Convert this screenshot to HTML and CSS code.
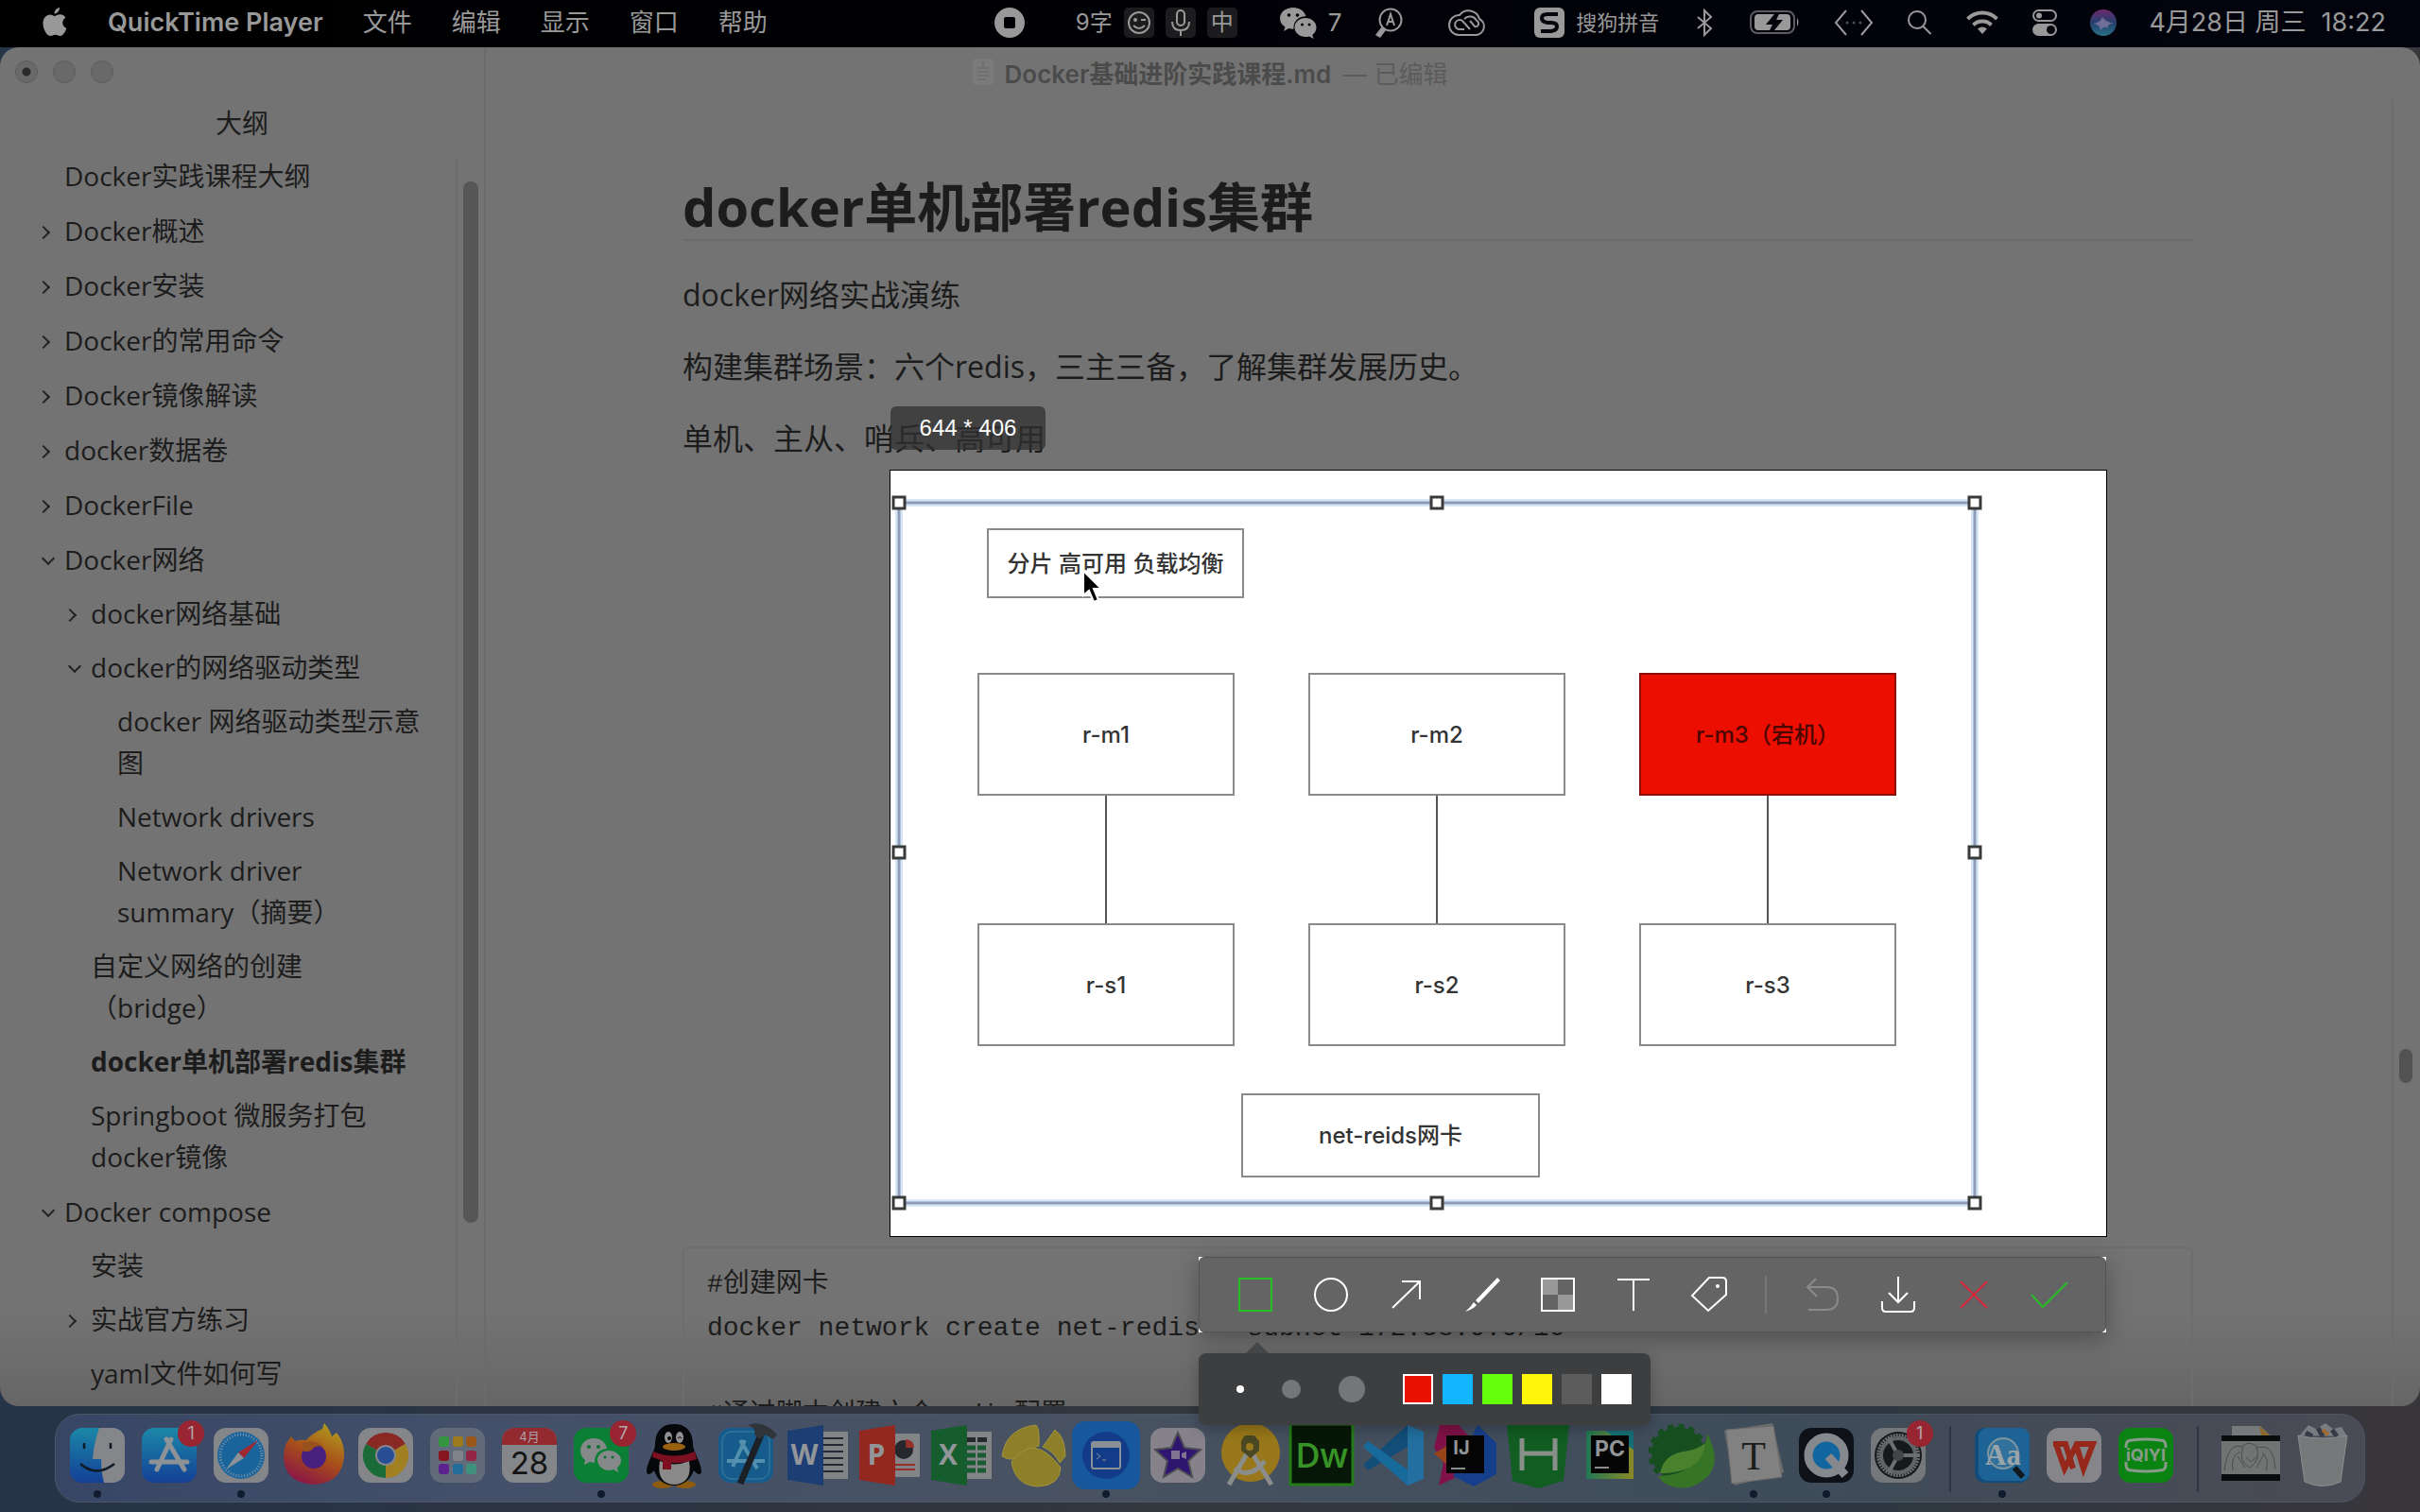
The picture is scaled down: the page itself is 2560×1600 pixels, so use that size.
FILE: index.html
```html
<!DOCTYPE html>
<html lang="zh-CN">
<head>
<meta charset="utf-8">
<title>Docker基础进阶实践课程.md</title>
<link rel="stylesheet" href="styles.css">
</head>
<body>

<header class="menubar">
	<nav class="menus">
		<button class="apple" aria-label="Apple"><svg width="28" height="34" viewBox="0 0 28 34"><path d="M19 1c.3 3-2.500 6.500-5.400 6.600C13.200 4.600 16 1.500 19 1zM13.800 10c1.400 0 3-1.700 5.800-1.700 2.300 0 4.500 1.200 5.900 3.300-4.800 2.800-4 9.700.9 11.500-1.300 3.500-3.700 7.900-6.500 8-2 0-2.700-1.300-5.200-1.300s-3.300 1.300-5.200 1.300C5.300 31.200 1.500 23.500 1.500 18c0-6 3.700-9.500 7.500-9.500 2.300 0 3.700 1.500 4.800 1.500z"/></svg></button>
		<button class="app-name">QuickTime Player</button>
		<button>文件</button>
		<button>编辑</button>
		<button>显示</button>
		<button>窗口</button>
		<button>帮助</button>
	</nav>
	<div class="status">
		<svg class="record" width="32" height="32" viewBox="0 0 32 32"><path fill-rule="evenodd" d="M16 0a16 16 0 1 0 0 32 16 16 0 0 0 0-32zM12 10h8q2 0 2 2v8q0 2-2 2h-8q-2 0-2-2v-8q0-2 2-2z"/></svg>
		<div class="ime">
			<span>9字</span>
			<svg width="32" height="32" viewBox="0 0 32 32"><rect class="key" width="32" height="32" rx="5"/><circle class="ln" cx="16" cy="16" r="11"/><circle cx="12" cy="13" r="2"/><path class="ln" d="M18 13h5M10 19q6 6 12 0"/></svg>
			<svg width="32" height="32" viewBox="0 0 32 32"><rect class="key" width="32" height="32" rx="5"/><rect class="ln" x="12" y="3" width="8" height="16" rx="4"/><path class="ln" d="M7 15q0 9 9 9t9-9M16 24v6"/></svg>
			<span class="key-text">中</span>
		</div>
		<div class="wechat-status">
			<svg width="40" height="34" viewBox="0 0 40 34"><path d="M15 1C7 1 1 6 1 12.500c0 4 2 7 5.500 9L5 26l5.500-3q2 .7 5 .7C15 16 20 10.500 28.500 10.300 27 4.500 21.500 1 15 1z"/><path d="M28 12c-6.500 0-11.500 4.500-11.500 10S21.500 32 28 32q2 0 4-.6L36.500 34 35.300 29.800c2.700-1.800 4.200-4.500 4.200-7.800 0-5.500-5-10-11.500-10z"/><g fill="#000"><circle cx="10.500" cy="9" r="1.800"/><circle cx="19.500" cy="9" r="1.800"/><circle cx="24.500" cy="19" r="1.500"/><circle cx="32" cy="19" r="1.500"/></g></svg>
			<span>7</span>
		</div>
		<svg width="32" height="34" viewBox="0 0 32 34"><circle class="ln" cx="18" cy="14" r="11.500" stroke-width="3"/><path d="M9 21l4 4-6 8-5-3z"/><path class="ln" d="M14 20l4-12 4 12M15.500 16h5"/></svg>
		<svg width="70" height="32" viewBox="0 0 70 32"><path class="ln" stroke-width="3" d="M24 29h18a9 9 0 0 0 4-17A12 12 0 0 0 25 8a10.500 10.500 0 0 0-1 21z"/><path class="ln" stroke-width="3" d="M36 23l-8-9a5 5 0 1 0-2 9h4M30 12a8 8 0 0 1 13 2M36 14l5 6a3 3 0 1 0 2-6"/></svg>
		<div class="sogou">
			<svg width="32" height="32" viewBox="0 0 32 32"><rect width="32" height="32" rx="6"/><path fill="none" stroke="#05060c" stroke-width="4" d="M25 7H14q-6 0-6 4t6 5h4q6 0 6 4t-6 5H7"/></svg>
			<span>搜狗拼音</span>
		</div>
		<svg width="28" height="30" viewBox="0 0 28 30"><path class="ln" d="M7 9l14 12-7 7V2l7 7L7 21"/></svg>
		<svg width="54" height="28" viewBox="0 0 54 28"><rect class="ln" x="1" y="2" width="46" height="23" rx="7" opacity=".6"/><path d="M50 9q3 4 0 9z"/><path d="M9 5h17l-9 11h7l-3 6H9q-4 0-4-4V9q0-4 4-4zM31 5h8q4 0 4 4v9q0 4-4 4H26l9-11h-7z"/></svg>
		<svg width="44" height="32" viewBox="0 0 44 32"><path class="ln" d="M14 3L3 16l11 13M30 3l11 13-11 13"/><g opacity=".5"><circle cx="15" cy="16" r="1.500"/><circle cx="22" cy="16" r="1.500"/><circle cx="29" cy="16" r="1.500"/></g></svg>
		<svg width="28" height="28" viewBox="0 0 28 28"><circle class="ln" cx="11" cy="11" r="9"/><path class="ln" stroke-width="3" d="M17.500 18l8 8"/></svg>
		<svg width="36" height="28" viewBox="0 0 36 28"><path class="ln thick" d="M2.500 10a22 22 0 0 1 31 0M8.500 16.500a13.500 13.500 0 0 1 19 0"/><path d="M18 26l-5-5.500q5-4 10 0z"/></svg>
		<svg width="28" height="30" viewBox="0 0 28 30"><rect class="ln" x="2" y="2" width="24" height="11" rx="5.500"/><circle cx="8" cy="7.500" r="3"/><rect x="1" y="16" width="26" height="13" rx="6.500"/><circle cx="20.500" cy="22.500" r="4.500" fill="#05060c"/></svg>
		<svg width="28" height="28" viewBox="0 0 28 28"><defs><linearGradient id="siri" x1="0" y1="0" x2="0" y2="1"><stop offset="0" stop-color="#6d2a6e"/><stop offset=".5" stop-color="#24406f"/><stop offset="1" stop-color="#2a6f86"/></linearGradient></defs><circle cx="14" cy="14" r="14" fill="url(#siri)"/><path d="M3 15q8-1 10-7 3 5 12 7-8 0-6 5-4-4-8 2 0-6-8-7z" fill="#6f6f9a"/></svg>
		<span class="clock"><span>4月28日 周三</span><span>18:22</span></span>
	</div>
</header>

<section class="window">
	<div class="titlebar">
		<div class="lights"><button class="edited" aria-label="关闭"></button><button aria-label="最小化"></button><button aria-label="缩放"></button></div>
		<div class="title">
			<svg width="22" height="28" viewBox="0 0 22 28"><rect width="22" height="28" rx="3" fill="#7a7a7a"/><path d="M5 10h12M5 14h12M5 18h12M5 22h9M11 3v6" stroke="#666" fill="none"/></svg>
			<strong>Docker基础进阶实践课程.md</strong>
			<span>— 已编辑</span>
		</div>
	</div>

	<aside class="sidebar">
		<h2>大纲</h2>
		<div class="outline">
			<ul class="tree">
				<li><a href="#">Docker实践课程大纲</a></li>
				<li class="closed"><a href="#">Docker概述</a></li>
				<li class="closed"><a href="#">Docker安装</a></li>
				<li class="closed"><a href="#">Docker的常用命令</a></li>
				<li class="closed"><a href="#">Docker镜像解读</a></li>
				<li class="closed"><a href="#">docker数据卷</a></li>
				<li class="closed"><a href="#">DockerFile</a></li>
				<li class="open"><a href="#">Docker网络</a>
					<ul>
						<li class="closed"><a href="#">docker网络基础</a></li>
						<li class="open"><a href="#">docker的网络驱动类型</a>
							<ul>
								<li><a href="#">docker 网络驱动类型示意图</a></li>
								<li><a href="#">Network drivers</a></li>
								<li><a href="#">Network driver summary（摘要）</a></li>
							</ul>
						</li>
						<li><a href="#">自定义网络的创建<br>（bridge）</a></li>
						<li><a href="#" class="current">docker单机部署redis集群</a></li>
						<li><a href="#">Springboot 微服务打包docker镜像</a></li>
					</ul>
				</li>
				<li class="open"><a href="#">Docker compose</a>
					<ul>
						<li><a href="#">安装</a></li>
						<li class="closed"><a href="#">实战官方练习</a></li>
						<li><a href="#">yaml文件如何写</a></li>
					</ul>
				</li>
			</ul>
			<div class="track"><div class="thumb"></div></div>
		</div>
	</aside>

	<main class="content">
		<article>
			<h1>docker单机部署redis集群</h1>
			<p>docker网络实战演练</p>
			<p>构建集群场景：六个redis，三主三备，了解集群发展历史。</p>
			<p>单机、主从、哨兵、高可用</p>

			<figure class="capture">
				<svg class="diagram" width="1286" height="810" viewBox="0 0 1286 810">
					<rect class="frame-glow" x="9" y="34" width="1138" height="741"/>
					<rect class="frame" x="9" y="34" width="1138" height="741"/>
					<path class="wire" d="M228 343v137M578 343v137M928 343v137"/>
					<g class="node">
						<rect x="103" y="62" width="270" height="72"/>
						<rect x="93" y="215" width="270" height="128"/>
						<rect x="443" y="215" width="270" height="128"/>
						<rect class="down" x="793" y="215" width="270" height="128"/>
						<rect x="93" y="480" width="270" height="128"/>
						<rect x="443" y="480" width="270" height="128"/>
						<rect x="793" y="480" width="270" height="128"/>
						<rect x="372" y="660" width="314" height="87"/>
					</g>
					<g class="label">
						<text x="238" y="107">分片 高可用 负载均衡</text>
						<text x="228" y="288">r-m1</text>
						<text x="578" y="288">r-m2</text>
						<text x="928" y="288" class="on-red">r-m3（宕机）</text>
						<text x="228" y="553">r-s1</text>
						<text x="578" y="553">r-s2</text>
						<text x="928" y="553">r-s3</text>
						<text x="529" y="712">net-reids网卡</text>
					</g>
					<g class="handle">
						<rect x="3" y="28" width="12" height="12"/><rect x="572" y="28" width="12" height="12"/><rect x="1141" y="28" width="12" height="12"/>
						<rect x="3" y="398" width="12" height="12"/><rect x="1141" y="398" width="12" height="12"/>
						<rect x="3" y="769" width="12" height="12"/><rect x="572" y="769" width="12" height="12"/><rect x="1141" y="769" width="12" height="12"/>
					</g>
					<path class="cursor" d="M204 106v26l6-5 5 12 5-2-5-12h8z"/>
				</svg>

				<div class="size">644 * 406</div>

				<div class="toolbar-back">
					<div class="toolbar">
						<button aria-label="矩形" class="green"><svg viewBox="0 0 40 40"><rect x="3" y="3" width="34" height="34"/></svg></button>
						<button aria-label="椭圆"><svg viewBox="0 0 40 40"><circle cx="20" cy="20" r="17"/></svg></button>
						<button aria-label="箭头"><svg viewBox="0 0 40 40"><path d="M5 34L34 6M15 6h19v19"/></svg></button>
						<button aria-label="画笔"><svg viewBox="0 0 40 40"><path class="solid" d="M36 2l3 3-23 24-3-3zM11 28l3 3q-3 4-12 7 6-5 9-10z"/></svg></button>
						<button aria-label="马赛克"><svg viewBox="0 0 40 40"><path class="shade" d="M4 4h16v16H4zM20 20h16v16H20z"/><rect x="3" y="3" width="34" height="34"/></svg></button>
						<button aria-label="文字"><svg viewBox="0 0 40 40"><path d="M3 4h34M20 4v33"/></svg></button>
						<button aria-label="标签"><svg viewBox="0 0 40 40"><path d="M20 2h14q4 0 4 4v14L19 37 2 21z"/><circle class="solid" cx="29" cy="11" r="2"/></svg></button>
						<span class="divider"></span>
						<button aria-label="撤销" class="off"><svg viewBox="0 0 40 40"><path d="M13 3L4 12l10 10M4 12h20q12 0 12 12t-12 12H5"/></svg></button>
						<button aria-label="保存"><svg viewBox="0 0 40 40"><path d="M20 1v27M10 18l10 10 10-10M3 27v7q0 4 4 4h26q4 0 4-4v-7"/></svg></button>
						<button aria-label="取消" class="red"><svg viewBox="0 0 40 40"><path d="M6 6l28 28M34 6L6 34"/></svg></button>
						<button aria-label="完成" class="green"><svg viewBox="0 0 40 40"><path d="M1 20l12 13L39 7"/></svg></button>
					</div>
				</div>

				<div class="options">
					<button class="dot small" aria-label="细"></button>
					<button class="dot medium" aria-label="中"></button>
					<button class="dot large" aria-label="粗"></button>
					<div class="swatches">
						<button class="c-red" aria-label="红"></button>
						<button class="c-blue" aria-label="蓝"></button>
						<button class="c-green" aria-label="绿"></button>
						<button class="c-yellow" aria-label="黄"></button>
						<button class="c-gray" aria-label="灰"></button>
						<button class="c-white" aria-label="白"></button>
					</div>
				</div>
			</figure>

			<pre><code>#创建网卡
docker network create net-redis --subnet 172.38.0.0/16

#通过脚本创建六个redis配置</code></pre>
		</article>
		<div class="page-track"><div class="page-thumb"></div></div>
	</main>
</section>

<footer class="desk">
	<nav class="dock">
		<!-- Finder -->
		<a href="#" class="running"><svg viewBox="0 0 72 72"><defs><linearGradient id="blue" x1="0" y1="0" x2="0" y2="1"><stop offset="0" stop-color="#1b88a8"/><stop offset="1" stop-color="#143f96"/></linearGradient><clipPath id="tile"><rect x="7" y="7" width="58" height="58" rx="13"/></clipPath></defs><g clip-path="url(#tile)"><path fill="url(#blue)" d="M7 7h58v58H7z"/><path fill="#85868a" d="M38 7q-6 17-7 33h9q0 14 3 25h22V7z"/></g><path d="M22 23v6M50 23v6M18 45q17 15 36 0" fill="none" stroke="#101a26" stroke-width="2.500"/></svg></a>
		<!-- App Store -->
		<a href="#"><svg viewBox="0 0 72 72"><rect x="7" y="7" width="58" height="58" rx="13" fill="url(#blue)"/><path d="M38 19L23 51M33 19l19 32M17 43h38" stroke="#8d9296" stroke-width="5" stroke-linecap="round"/></svg><b class="badge">1</b></a>
		<!-- Safari -->
		<a href="#" class="running"><svg viewBox="0 0 72 72"><rect x="7" y="7" width="58" height="58" rx="13" fill="#85868a"/><circle cx="36" cy="36" r="25" fill="#1a649c"/><circle cx="36" cy="36" r="22" fill="none" stroke="#7a93a8" stroke-width="3" stroke-dasharray="1 2"/><path d="M54 20L33 33l6 6z" fill="#a02830"/><path d="M20 51l13-18 6 6z" fill="#8d9094"/></svg></a>
		<!-- Firefox -->
		<a href="#"><svg viewBox="0 0 72 72"><defs><linearGradient id="fox" x1=".8" y1="0" x2=".3" y2="1"><stop offset="0" stop-color="#b0a020"/><stop offset=".5" stop-color="#a85018"/><stop offset="1" stop-color="#8a1448"/></linearGradient></defs><path fill="url(#fox)" d="M6 25l6-9 4 5q6-2 12-1 6-7 17-12l2-6q6 7 8 14l5-4q9 11 8 25-2 28-31 30Q5 66 4 38q0-7 2-13z"/><circle cx="36" cy="37" r="13" fill="#482080"/><path d="M23 23q14-5 23 4-8-2-11 2-3 5-13 2 4-3 1-8z" fill="#98501c"/></svg></a>
		<!-- Chrome -->
		<a href="#"><svg viewBox="0 0 72 72"><rect x="7" y="7" width="58" height="58" rx="13" fill="#85868a"/><path fill="#8a2823" d="M36 36L15.200 24a24 24 0 0 1 41.600 0z"/><path fill="#1b6b38" d="M36 36v24A24 24 0 0 1 15.200 24z"/><path fill="#a08020" d="M36 36l20.800-12A24 24 0 0 1 36 60z"/><circle cx="36" cy="36" r="11" fill="#85868a"/><circle cx="36" cy="36" r="9" fill="#284f96"/></svg></a>
		<!-- Launchpad -->
		<a href="#"><svg viewBox="0 0 72 72"><rect x="7" y="7" width="58" height="58" rx="13" fill="#626b7a"/><g><rect x="16" y="16" width="11" height="11" rx="3" fill="#359540"/><rect x="31" y="16" width="11" height="11" rx="3" fill="#9b7a1c"/><rect x="45" y="16" width="11" height="11" rx="3" fill="#9a581c"/><rect x="16" y="31" width="11" height="11" rx="3" fill="#861520"/><rect x="31" y="31" width="11" height="11" rx="3" fill="#818388"/><rect x="45" y="31" width="11" height="11" rx="3" fill="#932545"/><rect x="16" y="45" width="11" height="11" rx="3" fill="#5b2290"/><rect x="31" y="45" width="11" height="11" rx="3" fill="#226d9b"/><rect x="45" y="45" width="11" height="11" rx="3" fill="#3f917c"/></g></svg></a>
		<!-- Calendar -->
		<a href="#"><svg viewBox="0 0 72 72"><g clip-path="url(#tile)"><path fill="#85868a" d="M7 7h58v58H7z"/><path fill="#922a30" d="M7 7h58v18H7z"/></g><text x="36" y="21" font-size="13" fill="#a9a4a5">4月</text><text x="36" y="56" font-size="33" fill="#141414">28</text></svg></a>
		<!-- WeChat -->
		<a href="#" class="running"><svg viewBox="0 0 72 72"><rect x="7" y="7" width="58" height="58" rx="13" fill="#0b7f34"/><path fill="#85898a" d="M28 18c-8 0-14 6-14 13 0 4 2 8 5 10l-1 5 6-3 5 1c-1-10 7-15 13-15-1-7-7-11-14-11z"/><path fill="#85898a" d="M44 31c-7 0-12 5-12 10s5 11 12 11l5-1 5 3-1-5c2-2 4-4 4-8 0-5-6-10-13-10z"/><g fill="#0b6f30"><circle cx="23" cy="27" r="2"/><circle cx="33" cy="27" r="2"/><circle cx="40" cy="38" r="1.500"/><circle cx="48" cy="38" r="1.500"/></g></svg><b class="badge">7</b></a>
		<!-- QQ -->
		<a href="#"><svg viewBox="0 0 72 72"><ellipse cx="24" cy="67" rx="11" ry="4" fill="#8e5c10"/><ellipse cx="48" cy="67" rx="11" ry="4" fill="#8e5c10"/><path fill="#06070a" d="M36 3c14 0 20 9 20 22 0 6 9 19 9 28 0 4-4 4-8-1-4 10-11 16-21 16S18 62 15 52c-4 5-8 5-8 1 0-9 9-22 9-28C16 12 22 3 36 3z"/><path fill="#898989" d="M21 42q15 7 31 0 4 24-16 25-19-1-15-25z"/><ellipse cx="30" cy="17" rx="4" ry="6" fill="#929292"/><ellipse cx="42" cy="17" rx="4" ry="6" fill="#929292"/><circle cx="31" cy="18" r="2"/><path d="M40 18q2-3 4 0" stroke="#000" fill="none"/><ellipse cx="36" cy="27" rx="12" ry="4" fill="#986210"/><path fill="#7c1020" d="M14 32q22 9 44 0l2 8q-14 5-27 4v7h-9v-9l-11-4z"/></svg></a>
		<!-- Xcode -->
		<a href="#"><svg viewBox="0 0 72 72"><rect x="7" y="7" width="58" height="58" rx="13" fill="#155c8c"/><rect x="11" y="11" width="50" height="50" rx="10" fill="none" stroke="#417f9e"/><path d="M35 20L22 48M30 20l18 30M16 42h40" stroke="#5290ae" stroke-width="4"/><path d="M53 12L30 66" stroke="#1b2027" stroke-width="7"/><path fill="#30353a" d="M38 4q13-5 26 5l5 5-4 5-9-5-5 5-6-5q2-7-7-10z"/></svg></a>
		<!-- Word -->
		<a href="#"><svg viewBox="0 0 72 72"><path fill="#828486" d="M38 11h30v50H38z"/><path stroke="#232a35" stroke-width="2" d="M42 18h21M42 25h21M42 32h21M42 39h21M42 46h21M42 53h21"/><path fill="#1d3d75" d="M4 10l38-6v64L4 62z"/><text class="letter" x="22" y="46" font-size="30">W</text></svg></a>
		<!-- PowerPoint -->
		<a href="#"><svg viewBox="0 0 72 72"><path fill="#828486" d="M38 13h30v46H38z"/><circle cx="51" cy="30" r="10" fill="#25272c"/><path fill="#93302a" d="M53 19q9 1 9 9h-9z"/><path stroke="#93302a" stroke-width="2" d="M42 46h21M42 51h21"/><path fill="#92281f" d="M4 10l38-6v64L4 62z"/><text class="letter" x="22" y="46" font-size="30">P</text></svg></a>
		<!-- Excel -->
		<a href="#"><svg viewBox="0 0 72 72"><path fill="#828486" d="M38 11h30v50H38z"/><path fill="#25272c" d="M42 17h9v5h-9zM53 17h10v5H53z"/><path stroke="#195c33" stroke-width="5" stroke-dasharray="9 2" d="M42 28h22M42 36h22M42 44h22M42 52h22"/><path fill="#155d2c" d="M4 10l38-6v64L4 62z"/><text class="letter" x="22" y="46" font-size="30">X</text></svg></a>
		<!-- Yellow shells -->
		<a href="#"><svg viewBox="0 0 72 72"><g fill="#8d8029" stroke="#a2923d"><path d="M2 37Q6 8 37 4q5 0 4 22-14 3-22 13-9 3-17-2z"/><path d="M45 27l13-18q11 8 11 28l-6 7q-6-12-18-17z"/><path d="M12 43q24-32 52 6-1 19-24 20-24-1-28-26z"/></g></svg></a>
		<!-- Terminal client -->
		<a href="#" class="running"><svg viewBox="0 0 72 72"><rect x="0" y="0" width="72" height="72" rx="14" fill="#17579b"/><circle cx="36" cy="36" r="25" fill="#123c88"/><rect x="21" y="22" width="30" height="28" rx="2" fill="none" stroke="#8b9095" stroke-width="2"/><path fill="#8b9095" d="M21 22h30v6H21z"/><path d="M26 34l4 3-4 3M32 41h4" fill="none" stroke="#8b9095"/></svg></a>
		<!-- iMovie -->
		<a href="#"><svg viewBox="0 0 72 72"><rect x="7" y="7" width="58" height="58" rx="13" fill="#85828a"/><path fill="#301570" stroke="#4c4c55" stroke-width="2" d="M36 12l7 16 17 2-13 12 4 17-15-9-15 9 4-17-13-12 17-2z"/><path fill="#7f7590" d="M29 31h9v9h-9zM40 34l5-2v8l-5-2z"/></svg></a>
		<!-- Android Studio -->
		<a href="#"><svg viewBox="0 0 72 72"><circle cx="37" cy="33" r="31" fill="#98781a"/><path d="M35 31L14 67M37 31l22 36M20 50q17 12 32-8" fill="none" stroke="#8b8c8c" stroke-width="5"/><path fill="#4b4824" d="M31 15h10l5 6v10l-9 8-10-8V21z"/><circle cx="36" cy="27" r="4" fill="#98781a"/></svg></a>
		<!-- Dreamweaver -->
		<a href="#"><svg viewBox="0 0 72 72"><rect x="3" y="3" width="66" height="64" fill="#071707" stroke="#237c18" stroke-width="3"/><text class="dw" x="36" y="49" font-size="36">Dw</text></svg></a>
		<!-- VS Code -->
		<a href="#"><svg viewBox="0 0 72 72"><path fill="#124e78" d="M51 4L4 46l5 6 42-25z"/><path fill="#176b9a" d="M4 27l5-6 42 30v17z"/><path fill="#236f9f" d="M51 4l17 7v50l-17 7z"/></svg></a>
		<!-- IntelliJ IDEA -->
		<a href="#"><svg viewBox="0 0 72 72"><path fill="#801248" d="M8 4h20l13 14-13 40L7 68l5-24-10-16z"/><path fill="#964319" d="M2 34l16-9v23z"/><path fill="#163f8b" d="M48 4l20 19v33L44 69 22 58z"/><rect x="15" y="15" width="40" height="40" fill="#050505"/><text class="ide" x="31" y="35" font-size="20">IJ</text><path stroke="#8b8c8c" stroke-width="2" d="M20 50h15"/></svg></a>
		<!-- HBuilder -->
		<a href="#"><svg viewBox="0 0 72 72"><path fill="#115d22" d="M3 3h66l-6 60-27 8-27-8z"/><path d="M19 18v34M54 18v34M19 34h35" stroke="#899089" stroke-width="5"/></svg></a>
		<!-- PyCharm -->
		<a href="#"><svg viewBox="0 0 72 72"><defs><linearGradient id="charm"><stop offset="0" stop-color="#207854"/><stop offset="1" stop-color="#8b8924"/></linearGradient></defs><path fill="url(#charm)" d="M11 10h50v51H11z"/><path fill="#166f76" d="M31 10h30v20z"/><rect x="16" y="15" width="40" height="40" fill="#050505"/><text class="ide" x="36" y="37" font-size="23">PC</text><path stroke="#8b8c8c" stroke-width="2" d="M20 49h15"/></svg></a>
		<!-- Spring -->
		<a href="#"><svg viewBox="0 0 72 72"><circle cx="32" cy="34" r="28" fill="#164e20" stroke="#164e20" stroke-width="7" stroke-dasharray="6 5"/><path fill="#377526" d="M63 13q18 34-5 50-19 14-41 2l-6-7q32 0 45-23 6-9 7-22z"/><path fill="#4a812c" d="M61 23q-3 32-48 32 4-20 25-23 15-2 23-9z"/></svg></a>
		<!-- Typora -->
		<a href="#" class="running"><svg viewBox="0 0 72 72"><path fill="#6c6c6c" d="M5 10l51-8 12 52-52 14z"/><path fill="#818181" stroke="#6b6b6b" d="M7 9l50-4 9 54-53 7z"/><text class="typora" x="36" y="51" font-size="42">T</text></svg></a>
		<!-- QuickTime -->
		<a href="#" class="running"><svg viewBox="0 0 72 72"><rect x="7" y="7" width="58" height="58" rx="13" fill="#0e1217"/><circle cx="36" cy="36" r="19" fill="#1266a0" stroke="#85888d" stroke-width="9"/><path d="M38 37l18 20" stroke="#85888d" stroke-width="9"/></svg></a>
		<!-- System Preferences -->
		<a href="#"><svg viewBox="0 0 72 72"><rect x="7" y="7" width="58" height="58" rx="13" fill="#75777a"/><circle cx="36" cy="36" r="25" fill="#16191c"/><circle cx="36" cy="36" r="21" fill="none" stroke="#6d7072" stroke-width="4" stroke-dasharray="2 1"/><circle cx="36" cy="36" r="18" fill="none" stroke="#606366" stroke-width="4"/><path d="M26 18l10 18h20M36 36L26 54" fill="none" stroke="#6c6e70" stroke-width="4"/><circle cx="36" cy="36" r="6" fill="#424548"/></svg><b class="badge">1</b></a>
		<span class="split"></span>
		<!-- Dictionary -->
		<a href="#" class="running"><svg viewBox="0 0 72 72"><rect x="7" y="7" width="58" height="58" rx="10" fill="#124b7a"/><rect x="11" y="7" width="54" height="56" rx="9" fill="#1d6395"/><circle cx="37" cy="34" r="16" fill="#32719b" stroke="#7e949f" stroke-width="2"/><path d="M49 49l9 10" stroke="#11191e" stroke-width="6"/><text class="dict" x="37" y="46" font-size="31">Aa</text></svg></a>
		<!-- WPS -->
		<a href="#"><svg viewBox="0 0 72 72"><rect x="7" y="7" width="58" height="58" rx="13" fill="#86868a"/><path d="M14 24h13l8 26M17 24l9 26 13-26h17L46 50l-8-26" fill="none" stroke="#96281b" stroke-width="6"/></svg></a>
		<!-- iQIYI -->
		<a href="#"><svg viewBox="0 0 72 72"><rect x="7" y="7" width="58" height="58" rx="13" fill="#0b8313"/><path d="M15 28v-2q0-6 6-6 15-2 30 0 6 0 6 6v2M15 43v3q0 6 6 6 15 2 30 0 6 0 6-6v-3" fill="none" stroke="#8a9a8a" stroke-width="3"/><text class="iqiyi" x="36" y="42" font-size="18">iQIYI</text></svg></a>
		<span class="split"></span>
		<!-- Downloads stack -->
		<a href="#"><svg viewBox="0 0 72 72"><path fill="#777a7a" d="M16 5h30l15 14H16z"/><path fill="#8c692b" d="M45 5l16 14H48z"/><path fill="#0a0b0c" d="M5 15h62v48H5z"/><path fill="#717473" d="M5 21h62v35H5z"/><path d="M8 52q4-30 18-25 9-8 18 1 16-5 18 23M17 52q-3-15 8-20M28 27q-6 15 7 22 12-8 7-22M48 33q8 7 4 19M22 37l8 12M50 35l-8 14M31 38l5 5 6-5" fill="none" stroke="#4a4e4f"/></svg></a>
		<!-- Trash -->
		<a href="#"><svg viewBox="0 0 72 72"><path fill="#777d80" d="M12 15l9-11 8 4 10-6 8 6 9-2 6 10z"/><path d="M18 12l7 4M31 7l5 9M46 9l5 7" stroke="#333c46" stroke-width="5"/><path d="M36 9l6 5" stroke="#a06a32" stroke-width="4"/><path fill="#76787a" stroke="#8b8c8e" d="M10 15q26 6 52 0l-7 49q-19 9-38 0z"/></svg></a>
	</nav>
</footer>

</body>
</html>
```

FILE: styles.css
```css
*{
	box-sizing:border-box;
}
body{
	margin:0;
	height:100vh;
	display:flex;
	flex-direction:column;
	overflow:hidden;
	background:linear-gradient(90deg,#253447 0%,#2c3442 25%,#33383e 50%,#2c3843 72%,#39363b 100%);
	font-family:"Open Sans","Noto Sans CJK SC",sans-serif;
	color:#1c1c1c;
}
button{
	border:0;
	padding:0;
	background:none;
	font:inherit;
	color:inherit;
}
a{
	color:inherit;
	text-decoration:none;
}

/* menu bar */
.menubar{
	height:50px;
	flex:none;
	display:flex;
	justify-content:space-between;
	align-items:center;
	padding:0 36px 2px 44px;
	background:linear-gradient(90deg,#000,#02030d);
	color:#999;
	font-family:Inter,"Noto Sans CJK SC",sans-serif;
	font-size:26px;
	line-height:36px;
	white-space:nowrap;
}
.menus,.status,.ime,.wechat-status,.sogou,.clock{
	display:flex;
	align-items:center;
}
.menus{
	gap:42px;
}
.menubar svg{
	display:block;
	fill:#999;
}
.app-name{
	font-size:27px;
	font-weight:600;
}
.status{
	gap:34px;
}
.menubar .ln{
	fill:none;
	stroke:#999;
	stroke-width:2;
}
.menubar .thick{
	stroke-width:4;
}
.menubar .key{
	fill:#1c1c1e;
}
.record{
	margin-right:20px;
}
.ime{
	gap:12px;
	margin-right:10px;
}
.ime span{
	font-size:24px;
}
.ime .key-text{
	width:32px;
	height:32px;
	line-height:32px;
	border-radius:5px;
	background:#1c1c1e;
	text-align:center;
}
.wechat-status,.sogou{
	gap:12px;
}
.sogou span{
	font-size:22px;
}
.clock{
	gap:16px;
	font-size:27px;
}

/* editor window */
.window{
	flex:1;
	min-height:0;
	display:flex;
	position:relative;
	z-index:1;
	border-radius:20px;
	background:linear-gradient(0deg,#666 0,#737373 100px);
}
.titlebar{
	position:absolute;
	top:0;
	left:0;
	right:0;
	height:52px;
	display:flex;
	align-items:center;
	justify-content:center;
	font-family:Inter,"Noto Sans CJK SC",sans-serif;
	font-size:26px;
}
.lights{
	position:absolute;
	left:16px;
	display:flex;
	gap:16px;
}
.lights button{
	width:24px;
	height:24px;
	border:1px solid #5c5c5c;
	border-radius:50%;
	background:#696969;
}
.lights .edited{
	background:radial-gradient(circle,#2b2b2b 4px,#696969 5px);
}
.title{
	display:flex;
	align-items:center;
	gap:12px;
	color:#5c5c5c;
}
.title strong{
	font-weight:600;
	color:#4b4b4b;
}
.sidebar{
	width:514px;
	flex:none;
	display:flex;
	flex-direction:column;
	padding-top:58px;
	border-right:2px solid #6b6b6b;
	font-size:28px;
	line-height:44px;
}
.sidebar h2{
	margin:0 0 12px;
	font-size:28px;
	font-weight:400;
	text-align:center;
}
.outline{
	flex:1;
	min-height:0;
	display:flex;
}
.tree{
	flex:1;
	overflow:hidden;
	padding-right:36px;
	padding-left:68px;
}
.tree,.tree ul{
	margin:0;
	list-style:none;
}
.tree ul{
	padding:13px 0 0 28px;
}
.tree li{
	position:relative;
	margin-bottom:14px;
}
.tree li li{
	margin-bottom:13px;
}
.tree li:last-child{
	margin-bottom:0;
}
.tree a{
	display:block;
}
.tree .current{
	font-weight:700;
}
.closed::before,.open::before{
	content:"";
	position:absolute;
	left:-27px;
	top:19px;
	width:8px;
	height:8px;
	border:solid #222;
	border-width:2px 2px 0 0;
	transform:rotate(45deg);
}
.open::before{
	left:-22px;
	top:16px;
	transform:rotate(135deg);
}
.track{
	width:30px;
	margin-top:4px;
	padding:24px 6px 0;
	border-left:2px solid #6c6c6c;
}
.thumb{
	width:16px;
	height:85%;
	border-radius:8px;
	background:#565656;
}

/* document */
.content{
	flex:1;
	min-width:0;
	display:flex;
	padding-top:56px;
}
article{
	flex:1;
	min-width:0;
	display:flex;
	flex-direction:column;
	padding:0 210px 0 208px;
}
article h1{
	margin:77px 0 0;
	border-bottom:2px solid #6b6b6b;
	font-size:56px;
	line-height:70px;
}
article p{
	margin:31px 0 0;
	font-size:32px;
	line-height:51px;
}
article p + p{
	margin-top:25px;
}
.capture{
	position:relative;
	z-index:2;
	width:1288px;
	flex:none;
	margin:8px 0 10px 219px;
	border:1px solid #000;
	background:#fff;
}
.diagram{
	display:block;
}
.diagram rect,.diagram .wire{
	fill:none;
	stroke:#8a8a8a;
	stroke-width:2;
}
.diagram .frame{
	stroke:#8e9db5;
	stroke-width:3;
}
.diagram .frame-glow{
	stroke:#d6e6f7;
	stroke-width:8;
}
.diagram .wire{
	stroke:#555;
}
.diagram .node .down{
	fill:#ec0e00;
	stroke:#8c0d08;
}
.diagram .handle rect{
	fill:#fff;
	stroke:#3a3a3a;
	stroke-width:3;
}
.label{
	font-family:Inter,"Noto Sans CJK SC",sans-serif;
	font-size:24px;
	font-weight:500;
	fill:#333;
	text-anchor:middle;
}
.on-red{
	fill:#4a0600;
}
.cursor{
	fill:#000;
	stroke:#fff;
	stroke-width:2;
}
.size{
	position:absolute;
	left:0;
	top:-68px;
	width:164px;
	border-radius:6px;
	background:rgba(48,48,48,.75);
	color:#fff;
	font-family:"Liberation Sans",sans-serif;
	font-size:24px;
	line-height:46px;
	text-align:center;
}
.toolbar-back{
	position:absolute;
	right:0;
	top:calc(100% + 22px);
	background:#fff;
	box-shadow:0 6px 24px rgba(0,0,0,.3);
}
.toolbar{
	display:flex;
	align-items:center;
	height:80px;
	padding:0 19px;
	border:1px solid #535353;
	border-radius:6px;
	background:#646464;
}
.toolbar button{
	width:80px;
	height:78px;
	display:flex;
	align-items:center;
	justify-content:center;
	color:#fff;
}
.toolbar svg{
	width:40px;
	height:40px;
	fill:none;
	stroke:currentColor;
	stroke-width:2;
}
.toolbar .solid{
	fill:currentColor;
	stroke:none;
}
.toolbar .shade{
	fill:#999;
	stroke:none;
}
.toolbar .green{
	color:#27bd27;
}
.toolbar .red{
	color:#dc2639;
}
.toolbar .off{
	color:#8a8a8a;
}
.divider{
	width:2px;
	height:40px;
	margin:0 19px;
	background:#777;
}
.options{
	position:absolute;
	left:326px;
	top:calc(100% + 124px);
	height:76px;
	display:flex;
	align-items:center;
	padding:0 20px 0 40px;
	border-radius:8px;
	background:#3d3e3f;
	box-shadow:0 4px 16px rgba(0,0,0,.25);
}
.options::before{
	content:"";
	position:absolute;
	left:50px;
	top:-12px;
	border:solid transparent;
	border-width:0 12px 12px;
	border-bottom-color:#454647;
}
.dot{
	border-radius:50%;
	background:#737777;
}
.small{
	width:8px;
	height:8px;
	background:#fff;
}
.medium{
	width:20px;
	height:20px;
	margin-left:40px;
}
.large{
	width:28px;
	height:28px;
	margin-left:40px;
}
.swatches{
	display:flex;
	gap:10px;
	margin-left:40px;
}
.swatches button{
	width:32px;
	height:32px;
}
.c-red{
	background:#ea1002;
	box-shadow:inset 0 0 0 2px #fff;
}
.c-blue{
	background:#12b5ff;
}
.c-green{
	background:#65ff0c;
}
.c-yellow{
	background:#fff60c;
}
.c-gray{
	background:#5c5c5c;
}
.c-white{
	background:#fff;
}
pre{
	flex:1;
	min-height:0;
	overflow:hidden;
	margin:0;
	padding:16px 24px 0;
	border:2px solid #6d6d6d;
	border-bottom:0;
	border-radius:6px 6px 0 0;
}
code{
	font-family:"Liberation Mono","Noto Sans CJK SC",monospace;
	font-size:28px;
	line-height:46px;
}
.page-track{
	width:30px;
	padding:1004px 6px 0;
	border-left:2px solid #6c6c6c;
}
.page-thumb{
	width:14px;
	height:36px;
	border-radius:7px;
	background:#525252;
}

/* dock */
.desk{
	flex:none;
	padding:8px 58px 10px;
}
.dock{
	height:94px;
	display:flex;
	padding:0 6px;
	border:1px solid #4b5565;
	border-radius:26px;
	background:linear-gradient(90deg,#374665 0%,#44506a 18%,#485261 45%,#3e4c59 75%,#4a4b55 100%);
}
.dock a{
	flex:1;
	min-width:0;
	position:relative;
	display:flex;
	flex-direction:column;
	align-items:center;
	padding-top:7px;
}
.dock svg{
	width:72px;
	height:72px;
	flex:none;
}
.dock text{
	font-family:Inter,"Noto Sans CJK SC",sans-serif;
	text-anchor:middle;
}
.dock .letter{
	font-family:"Open Sans",sans-serif;
	font-weight:700;
	fill:#929599;
}
.dock .dw{
	font-family:"Open Sans",sans-serif;
	font-weight:600;
	fill:#379326;
}
.dock .ide{
	font-weight:700;
	fill:#929599;
}
.dock .typora{
	font-family:"Liberation Serif",serif;
	fill:#1c1c1c;
}
.dock .dict{
	font-family:"Liberation Serif",serif;
	font-weight:700;
	fill:#99a5aa;
}
.dock .iqiyi{
	font-weight:700;
	fill:#8a9a8a;
}
.running::after{
	content:"";
	width:8px;
	height:8px;
	margin-top:1px;
	border-radius:50%;
	background:#101b2e;
}
.badge{
	position:absolute;
	left:calc(50% + 9px);
	top:6px;
	width:28px;
	height:28px;
	border-radius:50%;
	background:#982531;
	color:#b2a5a7;
	font:18px/28px Inter,sans-serif;
	text-align:center;
}
.split{
	width:2px;
	height:70px;
	margin:12px 16px;
	background:#2c3644;
}
```
